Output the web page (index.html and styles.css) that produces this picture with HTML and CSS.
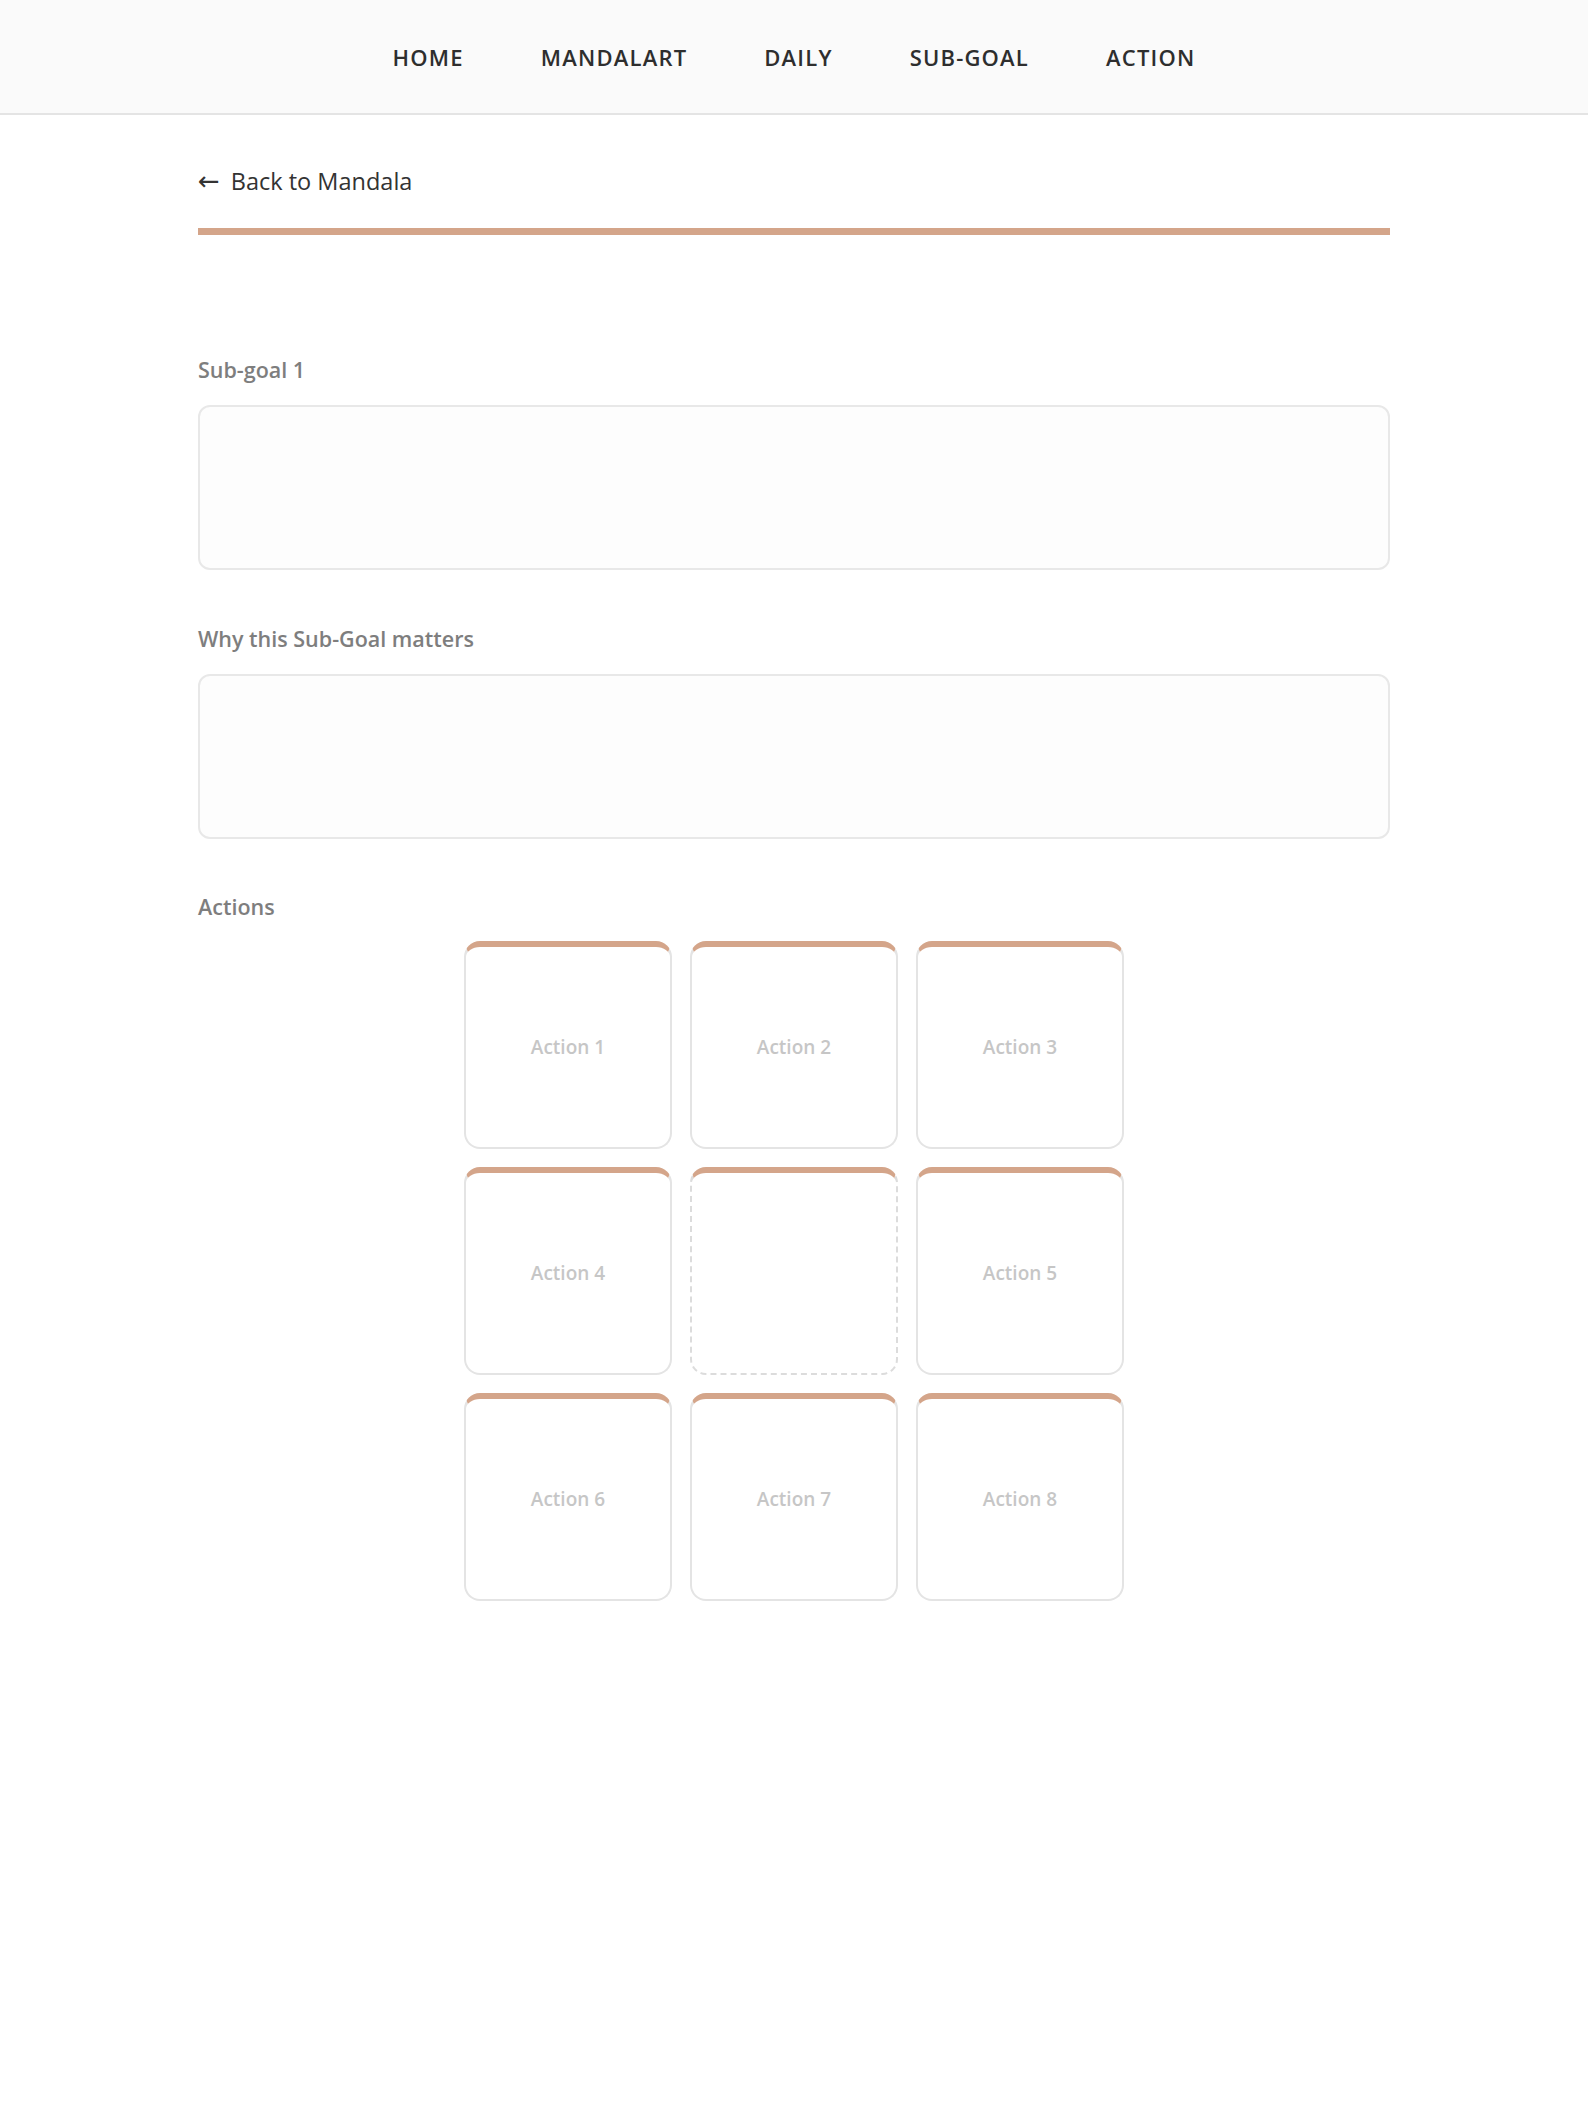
FILE: index.html
```html
<!DOCTYPE html>
<html lang="en">
<head>
    <meta charset="UTF-8">
    <meta name="viewport" content="width=device-width, initial-scale=1.0">
    <title>Sub-Goal</title>
    <link rel="stylesheet" href="styles.css">
</head>
<body>
<nav class="topnav">
    <a href="#">Home</a>
    <a href="#">Mandalart</a>
    <a href="#">Daily</a>
    <a href="#">Sub-Goal</a>
    <a href="#">Action</a>
</nav>

<main class="page">
    <a href="#" class="back-link"><span class="arrow">&larr;</span>Back to Mandala</a>
    <div class="accent-bar"></div>

    <label class="field-label" for="subgoal">Sub-goal 1</label>
    <textarea id="subgoal" class="field-box"></textarea>

    <label class="field-label" for="why">Why this Sub-Goal matters</label>
    <textarea id="why" class="field-box"></textarea>

    <div class="field-label actions-label">Actions</div>
    <div class="action-grid">
        <div class="action-cell">Action 1</div>
        <div class="action-cell">Action 2</div>
        <div class="action-cell">Action 3</div>
        <div class="action-cell">Action 4</div>
        <div class="action-cell center"></div>
        <div class="action-cell">Action 5</div>
        <div class="action-cell">Action 6</div>
        <div class="action-cell">Action 7</div>
        <div class="action-cell">Action 8</div>
    </div>
</main>
</body>
</html>
```

FILE: styles.css
```css
body {
    margin: 0;
    font-family: "Open Sans", "Noto Sans", Arial, sans-serif;
    background: #fff;
    color: #333;
}

.topnav {
    display: flex;
    justify-content: center;
    align-items: center;
    gap: 77px;
    height: 113px;
    background: #fafafa;
    border-bottom: 2px solid #e4e4e4;
}
.topnav a {
    color: #2e2e2e;
    text-decoration: none;
    text-transform: uppercase;
    font-size: 22px;
    font-weight: 600;
    letter-spacing: 1.2px;
}

.page {
    width: 1192px;
    margin: 0 auto;
    padding-top: 50px;
    display: flex;
    flex-direction: column;
}

.back-link {
    display: flex;
    align-items: center;
    color: #333;
    text-decoration: none;
    font-size: 23.5px;
    line-height: 32px;
}
.back-link .arrow {
    font-family: "DejaVu Sans", sans-serif;
    font-size: 26px;
    margin-right: 11px;
}
.accent-bar {
    height: 7px;
    margin-top: 31px;
    background: #d4a58a;
}

.field-label {
    margin-top: 54px;
    font-size: 21.5px;
    line-height: 30px;
    color: #7e7e7e;
    font-weight: 600;
}
.accent-bar + .field-label { margin-top: 120px; }

.field-box {
    box-sizing: border-box;
    height: 165px;
    margin-top: 20px;
    background: #fdfdfd;
    border: 2px solid #e8e8e8;
    border-radius: 12px;
    resize: none;
    font: inherit;
}

.actions-label { margin-top: 53px; }

.action-grid {
    display: grid;
    grid-template-columns: repeat(3, 208px);
    grid-auto-rows: 208px;
    gap: 18px;
    justify-content: center;
    margin-top: 19px;
}
.action-cell {
    box-sizing: border-box;
    display: flex;
    align-items: center;
    justify-content: center;
    background: #fff;
    border: 2px solid #e4e4e4;
    border-top: 6px solid #d4a58a;
    border-radius: 16px;
    color: #c6c6c6;
    font-size: 19px;
    font-weight: 600;
}
.action-cell.center {
    border: 2px dashed #dcdcdc;
    border-top: 6px solid #d4a58a;
}
```
